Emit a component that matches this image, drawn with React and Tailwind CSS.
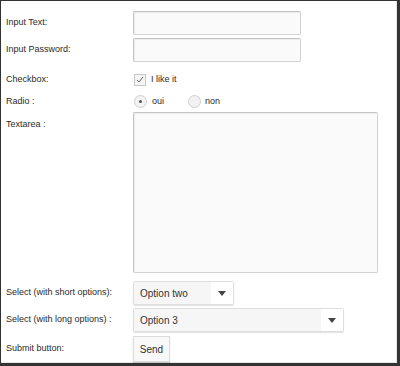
import React from 'react';

const font = { fontFamily: '"Liberation Sans", Arial, sans-serif' };

function Label({ children, className = '' }) {
    return (
        <div className={`w-[127px] shrink-0 text-[9px] text-[#2a2a2a] ${className}`}>{children}</div>
    );
}

function Field({ className = '' }) {
    return (
        <div className={`rounded-[2px] border border-[#d2d2d2] border-t-[#c4c4c4] border-l-[#c4c4c4] bg-[#fafafa] shadow-[inset_1px_1px_1px_rgba(0,0,0,0.06)] ${className}`} />
    );
}

function Select({ value, className = '' }) {
    return (
        <div className={`flex h-[24px] rounded-[2px] border border-[#dedede] shadow-[0_1px_1px_rgba(0,0,0,0.12)] ${className}`}>
            <div className="flex flex-1 items-center bg-[#f6f6f6] pl-[6px] text-[10px] text-[#333]">{value}</div>
            <div className="flex w-[22px] items-center justify-center bg-white">
                <svg width="8" height="5" viewBox="0 0 8 5"><path d="M0 0h8L4 5z" fill="#444" /></svg>
            </div>
        </div>
    );
}

export default function App() {
    return (
        <div style={font} className="h-[366px] w-[400px] border-t border-l border-r-[3px] border-b-[3px] border-[#333] bg-white">
            <div className="h-full border-r border-b border-[#e6e6e6] pl-[5px] pt-[10px]">
                {/* text inputs */}
                <div className="flex items-center">
                    <Label>Input Text:</Label>
                    <Field className="h-[24px] w-[168px]" />
                </div>
                <div className="mt-[3px] flex items-center">
                    <Label>Input Password:</Label>
                    <Field className="h-[24px] w-[168px]" />
                </div>

                {/* checkbox */}
                <div className="mt-[11px] flex items-center">
                    <Label>Checkbox:</Label>
                    <div className="ml-[1px] flex items-center gap-[5px]">
                        <div className="flex h-[12px] w-[12px] items-center justify-center border border-[#c8c8c8] bg-[#f4f4f4]">
                            <svg width="8" height="7" viewBox="0 0 8 7"><path d="M1 4l2 2 4-5" fill="none" stroke="#666" strokeWidth="1" /></svg>
                        </div>
                        <span className="text-[9px] text-[#2a2a2a]">I like it</span>
                    </div>
                </div>

                {/* radios */}
                <div className="mt-[8px] flex items-center">
                    <Label>Radio :</Label>
                    <div className="ml-[1px] flex items-center">
                        <div className="flex h-[13px] w-[13px] items-center justify-center rounded-full border border-[#cfcfcf] bg-[#f2f2f2]">
                            <div className="h-[3px] w-[3px] rounded-full bg-[#555]" />
                        </div>
                        <span className="ml-[5px] text-[9px] text-[#2a2a2a]">oui</span>
                        <div className="ml-[24px] h-[13px] w-[13px] rounded-full border border-[#cfcfcf] bg-[#f2f2f2]" />
                        <span className="ml-[4px] text-[9px] text-[#2a2a2a]">non</span>
                    </div>
                </div>

                {/* textarea */}
                <div className="mt-[4px] flex items-start">
                    <Label className="pt-[6px]">Textarea :</Label>
                    <Field className="h-[161px] w-[245px]" />
                </div>

                {/* selects */}
                <div className="mt-[8px] flex items-center">
                    <Label>Select (with short options):</Label>
                    <Select value="Option two" className="w-[101px]" />
                </div>
                <div className="mt-[3px] flex items-center">
                    <Label>Select (with long options) :</Label>
                    <Select value="Option 3" className="w-[211px]" />
                </div>

                {/* submit */}
                <div className="mt-[4px] flex items-center">
                    <Label>Submit button:</Label>
                    <button className="h-[26px] w-[37px] border border-[#dcdcdc] bg-[#f8f8f8] text-[10px] text-[#333] shadow-[0_1px_1px_rgba(0,0,0,0.15)]">Send</button>
                </div>
            </div>
        </div>
    );
}
